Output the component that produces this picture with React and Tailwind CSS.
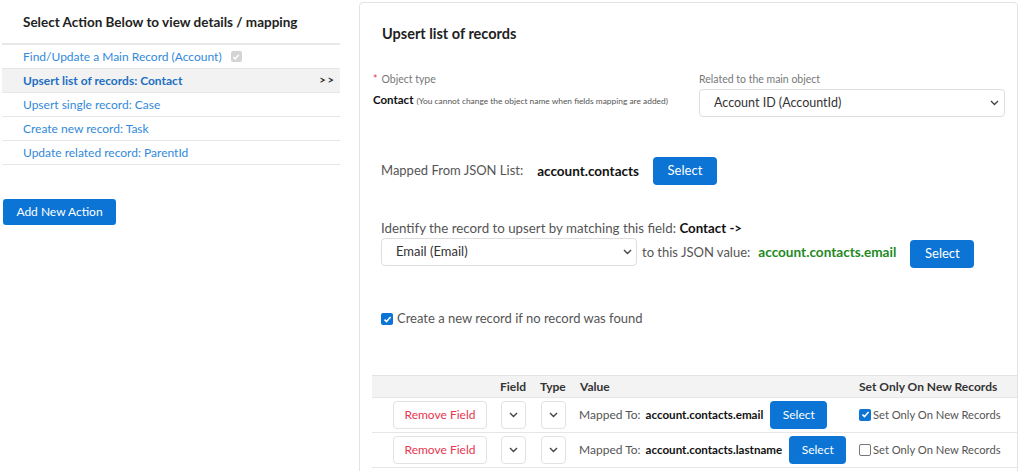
import React from 'react';

const font = { fontFamily: 'Lato, "Open Sans", sans-serif' };

const actions = [
  { label: 'Find/Update a Main Record (Account)', locked: true },
  { label: 'Upsert list of records: Contact', active: true },
  { label: 'Upsert single record: Case' },
  { label: 'Create new record: Task' },
  { label: 'Update related record: ParentId' },
];

const Chevron = () => (
  <svg width="9" height="6" viewBox="0 0 9 6" fill="none">
    <path d="M1 1l3.5 3.5L8 1" stroke="#444" strokeWidth="1.4" />
  </svg>
);

const SelectBtn = ({ className = '' }) => (
  <button className={`h-[28px] rounded-[4px] bg-[#0b74d4] text-white ${className}`}>Select</button>
);

const Checkbox = ({ checked }) =>
  checked ? (
    <span className="inline-flex w-[12px] h-[12px] rounded-[2px] bg-[#0b74d4] items-center justify-center">
      <svg width="9" height="9" viewBox="0 0 9 9">
        <path d="M1.5 4.6l2 2L7.6 2" stroke="white" strokeWidth="1.6" fill="none" />
      </svg>
    </span>
  ) : (
    <span className="inline-block w-[12px] h-[12px] rounded-[2px] border border-[#767676] bg-white" />
  );

const MappingRow = ({ path, checked }) => (
  <div className="flex items-center h-[35px] border-b border-[#e6e6e6]">
    <div className="w-[128px] pl-[21px]">
      <button className="w-[94px] h-[28px] border border-[#e2e2e2] rounded-[4px] bg-white text-[#e8364e] text-[12px]">Remove Field</button>
    </div>
    <div className="w-[40px] pl-[1px]">
      <div className="w-[25px] h-[28px] border border-[#e2e2e2] rounded-[4px] flex items-center justify-center"><Chevron /></div>
    </div>
    <div className="w-[39px] pl-[1px]">
      <div className="w-[25px] h-[28px] border border-[#e2e2e2] rounded-[4px] flex items-center justify-center"><Chevron /></div>
    </div>
    <div className="w-[280px] flex items-center text-[12px] text-[#555]">
      <span>Mapped To:</span>
      <span className="ml-[5px] font-bold text-[#111] text-[11.6px]">{path}</span>
      <SelectBtn className="ml-[7px] w-[57px] text-[12px]" />
    </div>
    <span className="flex items-center gap-[2px] text-[#555]">
      <Checkbox checked={checked} />
      <span className="text-[11.2px]">Set Only On New Records</span>
    </span>
  </div>
);

export default function App() {
  return (
    <div className="w-[1024px] h-[471px] overflow-hidden bg-white flex text-[#333]" style={font}>
      {/* left column */}
      <div className="w-[342px] shrink-0 pt-[12px]">
        <div className="pl-[23px] text-[13.5px] font-bold text-[#222] h-[20px] leading-[20px]">
          Select Action Below to view details / mapping
        </div>
        <div className="mt-[11px] mx-[2px] border-t-2 border-[#e8e8e8]">
          {actions.map((a) => (
            <div
              key={a.label}
              className={`flex items-center h-[24px] pl-[21px] pr-[4px] border-b border-[#e6e6e6] text-[12px] ${
                a.active ? 'bg-[#f2f2f2] font-bold text-[#1d6fc2]' : 'text-[#3289da]'
              }`}
            >
              <span>{a.label}</span>
              {a.locked && (
                <span className="ml-[9px] inline-flex w-[11px] h-[11px] rounded-[2px] bg-[#d4d4d4] items-center justify-center">
                  <svg width="8" height="8" viewBox="0 0 9 9">
                    <path d="M1.5 4.6l2 2L7.6 2" stroke="white" strokeWidth="1.6" fill="none" />
                  </svg>
                </span>
              )}
              {a.active && <span className="ml-auto text-[11px] text-[#333] tracking-[2px]">&gt;&gt;</span>}
            </div>
          ))}
        </div>
        <button className="ml-[3px] mt-[34px] w-[113px] h-[26px] rounded-[3px] bg-[#0b74d4] text-white text-[12px]">
          Add New Action
        </button>
      </div>

      {/* right card */}
      <div className="ml-[17px] w-[659px] mt-[2px] border border-[#e3e3e3] rounded-[4px] h-[520px] shrink-0">
        <div className="pl-[22px] pt-[21px] text-[14.5px] font-bold text-[#222] h-[41px] leading-[20px]">
          Upsert list of records
        </div>

        <div className="flex mt-[27px]">
          <div className="pl-[13px] w-[339px]">
            <div className="text-[10.5px] text-[#777] h-[16px] leading-[16px]">
              <span className="text-[#e8364e] mr-[4px]">*</span>Object type
            </div>
            <div className="mt-[2px] h-[18px] leading-[18px]">
              <span className="text-[11.5px] font-bold text-[#111]">Contact</span>
              <span className="ml-[3px] text-[8.4px] text-[#555]">(You cannot change the object name when fields mapping are added)</span>
            </div>
          </div>
          <div>
            <div className="text-[10.5px] text-[#777] h-[16px] leading-[16px]">Related to the main object</div>
            <div className="mt-[2px] w-[306px] h-[28px] border border-[#dedede] rounded-[4px] flex items-center pl-[14px] pr-[5px] text-[12.5px] text-[#333]">
              <span>Account ID (AccountId)</span>
              <span className="ml-auto"><Chevron /></span>
            </div>
          </div>
        </div>

        <div className="flex items-center pl-[21px] mt-[40px] h-[28px] text-[13px]">
          <span className="text-[#555]">Mapped From JSON List:</span>
          <span className="ml-[14px] font-bold text-[#111] text-[13.5px]">account.contacts</span>
          <SelectBtn className="ml-[14px] w-[64px] text-[13px]" />
        </div>

        <div className="pl-[21px] mt-[34px] h-[18px] leading-[18px] text-[13.3px] text-[#555]">
          Identify the record to upsert by matching this field: <span className="font-bold text-[#111]">Contact -&gt;</span>
        </div>
        <div className="flex items-start pl-[21px] mt-[1px] text-[13px]">
          <div className="w-[256px] h-[28px] border border-[#dedede] rounded-[4px] flex items-center pl-[14px] pr-[4px] text-[#333]">
            <span>Email (Email)</span>
            <span className="ml-auto"><Chevron /></span>
          </div>
          <span className="ml-[5px] text-[#555] h-[28px] leading-[28px]">to this JSON value:</span>
          <span className="ml-[8px] font-bold text-[#1f8a1f] text-[13.6px] h-[28px] leading-[28px]">account.contacts.email</span>
          <SelectBtn className="ml-[14px] w-[64px] mt-[2px] text-[13px]" />
        </div>

        <div className="flex items-center gap-[4px] pl-[21px] mt-[42px] text-[13px] text-[#555] h-[18px]">
          <Checkbox checked />
          <span>Create a new record if no record was found</span>
        </div>

        <div className="ml-[12px] mt-[47px] border-t border-[#e3e3e3]">
          <div className="flex items-center h-[22px] bg-[#f3f3f3] border-b border-[#e6e6e6] text-[12px] font-bold text-[#333]">
            <span className="w-[128px]" />
            <span className="w-[40px]">Field</span>
            <span className="w-[40px]">Type</span>
            <span className="w-[279px]">Value</span>
            <span>Set Only On New Records</span>
          </div>
          <MappingRow path="account.contacts.email" checked />
          <MappingRow path="account.contacts.lastname" />
        </div>
      </div>
    </div>
  );
}
